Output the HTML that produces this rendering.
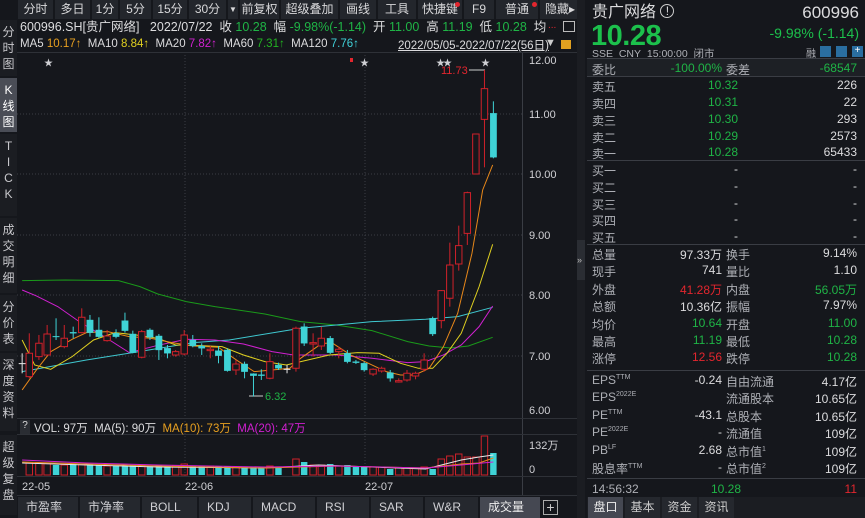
<!DOCTYPE html>
<html><head><meta charset="utf-8">
<style>
*{margin:0;padding:0;box-sizing:border-box}
body{width:865px;height:518px;background:#15171c;font-family:"Liberation Sans","Noto Sans CJK SC",sans-serif;font-size:12px;color:#d6d6d8;position:relative;overflow:hidden}
.a{position:absolute;white-space:nowrap}
.g{color:#1fb446}.r{color:#e3262e}.w{color:#dcdcde}.l{color:#aeb0b6}
.tb{position:absolute;top:0;height:19px;background:#23262c;color:#d8d8da;font-size:12px;line-height:19px;text-align:center}
.lt{position:absolute;left:0;width:17px;background:#1b1d22;color:#c8c8cc;font-size:12px;line-height:16px;text-align:center;padding-top:4px}
.bt{position:absolute;top:497px;height:21px;background:#25282e;color:#d0d0d4;font-size:12px;line-height:21px;padding-left:8px}
</style></head><body>
<div class="tb" style="left:18px;width:35px">分时</div>
<div class="tb" style="left:55px;width:35px">多日</div>
<div class="tb" style="left:92px;width:26px">1分</div>
<div class="tb" style="left:120px;width:31px">5分</div>
<div class="tb" style="left:153px;width:34px">15分</div>
<div class="tb" style="left:189px;width:37px">30分</div>
<div class="tb" style="left:228px;width:10px;font-size:8px">▼</div>
<div class="tb" style="left:240px;width:39px">前复权</div>
<div class="tb" style="left:281px;width:57px">超级叠加</div>
<div class="tb" style="left:340px;width:36px">画线</div>
<div class="tb" style="left:378px;width:38px">工具</div>
<div class="tb" style="left:418px;width:44px">快捷键</div>
<div class="tb" style="left:464px;width:30px">F9</div>
<div class="tb" style="left:496px;width:42px">普通</div>
<div class="tb" style="left:540px;width:40px">隐藏▸</div>
<div class="a" style="left:455px;top:2px;width:5px;height:5px;border-radius:3px;background:#e3262e"></div>
<div class="a" style="left:532px;top:2px;width:5px;height:5px;border-radius:3px;background:#e3262e"></div>
<div class="lt" style="top:20px;height:56px">分<br>时<br>图</div>
<div class="lt" style="top:78px;height:54px;background:#4a4d56;color:#fff">K<br>线<br>图</div>
<div class="lt" style="top:134px;height:82px">T<br>I<br>C<br>K</div>
<div class="lt" style="top:218px;height:75px">成<br>交<br>明<br>细</div>
<div class="lt" style="top:295px;height:56px">分<br>价<br>表</div>
<div class="lt" style="top:353px;height:78px">深<br>度<br>资<br>料</div>
<div class="lt" style="top:435px;height:80px">超<br>级<br>复<br>盘</div>
<div class="a w" style="left:20px;top:19px;line-height:16px;font-size:12.5px">600996.SH[贵广网络]&nbsp;&nbsp; 2022/07/22&nbsp; 收 <span class="g">10.28</span>&nbsp; 幅 <span class="g">-9.98%(-1.14)</span>&nbsp; 开 <span class="g">11.00</span>&nbsp; 高 <span class="g">11.19</span>&nbsp; 低 <span class="g">10.28</span>&nbsp; 均</div>
<div class="a r" style="left:548px;top:20px;font-size:10px">...</div>
<div class="a" style="left:563px;top:21px;width:12px;height:11px;border:1px solid #bbb"></div>
<div class="a w" style="left:20px;top:36px;line-height:16px;font-size:11.5px">MA5 <span style="color:#e8a020">10.17↑</span>&nbsp; MA10 <span style="color:#e0d020">8.84↑</span>&nbsp; MA20 <span style="color:#d020d0">7.82↑</span>&nbsp; MA60 <span style="color:#22b422">7.31↑</span>&nbsp; MA120 <span style="color:#40d0d8">7.76↑</span></div>
<div class="a w" style="left:398px;top:37px;font-size:11.5px;text-decoration:underline">2022/05/05-2022/07/22(56日)</div>
<div class="a" style="left:545px;top:37px;color:#ccc;font-size:11px">▼</div>
<div class="a" style="left:561px;top:40px;width:10px;height:9px;background:#e0a020"></div>
<svg class="a" style="left:17px;top:52px" width="560" height="444">
<g stroke="#3a3d44" stroke-dasharray="1,2" stroke-width="1">
<line x1="0" y1="62" x2="505" y2="62"/><line x1="0" y1="122" x2="505" y2="122"/><line x1="0" y1="183" x2="505" y2="183"/><line x1="0" y1="243" x2="505" y2="243"/><line x1="0" y1="304" x2="505" y2="304"/>
<line x1="168" y1="0" x2="168" y2="424"/><line x1="348" y1="0" x2="348" y2="424"/>
</g>
<line x1="505.5" y1="0" x2="505.5" y2="444" stroke="#3a3d44"/>
<line x1="0" y1="0.5" x2="560" y2="0.5" stroke="#2e3137"/>
<line x1="0" y1="366.5" x2="560" y2="366.5" stroke="#2e3137"/>
<line x1="0" y1="382.5" x2="560" y2="382.5" stroke="#2e3137"/>
<line x1="0" y1="424.5" x2="560" y2="424.5" stroke="#2e3137"/>
<line x1="0" y1="443.5" x2="560" y2="443.5" stroke="#2e3137"/>
<g fill="#d0d0d4" font-size="11" font-family="Liberation Sans">
<text x="512" y="12">12.00</text><text x="512" y="66">11.00</text><text x="512" y="126">10.00</text><text x="512" y="187">9.00</text><text x="512" y="247">8.00</text><text x="512" y="308">7.00</text><text x="512" y="362">6.00</text>
<text x="512" y="397">132万</text><text x="512" y="421">0</text>
<text x="5" y="438">22-05</text><text x="168" y="438">22-06</text><text x="348" y="438">22-07</text>
</g>
<g fill="#cfd0d4" font-size="9"><text x="27" y="14">★</text><text x="343" y="14">★</text><text x="419" y="14">★</text><text x="426" y="14">★</text><text x="464" y="14">★</text></g>
<rect x="333" y="6" width="3" height="4" fill="#e3262e"/>
<text x="424" y="22" fill="#e3262e" font-size="11">11.73</text>
<line x1="452" y1="18" x2="468" y2="18" stroke="#ccc"/>
<text x="248" y="348" fill="#1fb446" font-size="11">6.32</text>
<line x1="232" y1="344" x2="246" y2="344" stroke="#ccc"/>
<g transform="translate(-2,8) scale(0.357,0.3333)">
<g fill="none">
<polyline stroke="#1a9a1a" vector-effect="non-scaling-stroke" points="20,662 140,660 290,662 350,680 400,702 480,725 560,740 700,762 800,785 900,795 1000,812 1100,845 1160,858 1220,864 1270,858 1338,832"/>
<polyline stroke="#3fc8d0" vector-effect="non-scaling-stroke" points="20,935 200,900 330,878 500,848 600,840 800,805 900,795 1000,785 1150,778 1240,770 1338,742"/>
<polyline stroke="#d020d0" vector-effect="non-scaling-stroke" points="20,690 60,708 120,740 180,785 250,830 320,878 400,856 480,838 560,840 640,852 720,875 780,885 900,885 1000,895 1100,908 1150,905 1200,885 1250,855 1300,800 1338,738"/>
<polyline stroke="#e0d020" vector-effect="non-scaling-stroke" points="20,840 55,915 100,928 160,890 220,840 280,818 340,825 400,835 450,855 520,857 580,860 640,885 700,905 760,915 820,900 880,885 960,878 1020,880 1080,910 1130,925 1170,925 1210,880 1250,820 1300,680 1338,553"/>
<polyline stroke="#e8881a" vector-effect="non-scaling-stroke" points="20,990 60,930 100,875 160,838 200,818 260,815 320,830 380,835 440,848 500,858 570,862 620,900 670,935 720,930 770,925 800,895 860,850 890,850 940,885 990,910 1040,935 1080,945 1120,945 1160,925 1200,860 1240,760 1280,580 1310,390 1338,315"/>
</g>
<g>
<g stroke="#d0212a" fill="#15171c">
<line x1="40" y1="820" x2="40" y2="955" vector-effect="non-scaling-stroke"/><rect x="31" y="880" width="18" height="70" vector-effect="non-scaling-stroke"/>
<line x1="67" y1="825" x2="67" y2="900" vector-effect="non-scaling-stroke"/><rect x="58" y="850" width="18" height="40" vector-effect="non-scaling-stroke"/>
<line x1="90" y1="795" x2="90" y2="885" vector-effect="non-scaling-stroke"/><rect x="81" y="822" width="18" height="63" vector-effect="non-scaling-stroke"/>
<line x1="138" y1="795" x2="138" y2="865" vector-effect="non-scaling-stroke"/><rect x="129" y="835" width="18" height="25" vector-effect="non-scaling-stroke"/>
<line x1="187" y1="745" x2="187" y2="820" vector-effect="non-scaling-stroke"/><rect x="178" y="772" width="18" height="46" vector-effect="non-scaling-stroke"/>
<line x1="258" y1="810" x2="258" y2="845" vector-effect="non-scaling-stroke"/><rect x="249" y="828" width="18" height="14" vector-effect="non-scaling-stroke"/>
<line x1="355" y1="810" x2="355" y2="895" vector-effect="non-scaling-stroke"/><rect x="346" y="815" width="18" height="77" vector-effect="non-scaling-stroke"/>
<line x1="450" y1="870" x2="450" y2="890" vector-effect="non-scaling-stroke"/><rect x="441" y="875" width="18" height="10" vector-effect="non-scaling-stroke"/>
<line x1="474" y1="810" x2="474" y2="886" vector-effect="non-scaling-stroke"/><rect x="465" y="825" width="18" height="57" vector-effect="non-scaling-stroke"/>
<line x1="547" y1="858" x2="547" y2="895" vector-effect="non-scaling-stroke"/><rect x="538" y="868" width="18" height="4" vector-effect="non-scaling-stroke"/>
<line x1="619" y1="900" x2="619" y2="945" vector-effect="non-scaling-stroke"/><rect x="610" y="912" width="18" height="18" vector-effect="non-scaling-stroke"/>
<line x1="714" y1="880" x2="714" y2="958" vector-effect="non-scaling-stroke"/><rect x="705" y="905" width="18" height="50" vector-effect="non-scaling-stroke"/>
<line x1="787" y1="800" x2="787" y2="935" vector-effect="non-scaling-stroke"/><rect x="778" y="805" width="18" height="120" vector-effect="non-scaling-stroke"/>
<line x1="835" y1="820" x2="835" y2="890" vector-effect="non-scaling-stroke"/><rect x="826" y="848" width="18" height="4" vector-effect="non-scaling-stroke"/>
<line x1="858" y1="800" x2="858" y2="870" vector-effect="non-scaling-stroke"/><rect x="849" y="835" width="18" height="23" vector-effect="non-scaling-stroke"/>
<line x1="907" y1="860" x2="907" y2="895" vector-effect="non-scaling-stroke"/><rect x="898" y="868" width="18" height="7" vector-effect="non-scaling-stroke"/>
<line x1="1003" y1="925" x2="1003" y2="948" vector-effect="non-scaling-stroke"/><rect x="994" y="928" width="18" height="14" vector-effect="non-scaling-stroke"/>
<line x1="1027" y1="920" x2="1027" y2="938" vector-effect="non-scaling-stroke"/><rect x="1018" y="925" width="18" height="8" vector-effect="non-scaling-stroke"/>
<line x1="1075" y1="955" x2="1075" y2="968" vector-effect="non-scaling-stroke"/><rect x="1066" y="962" width="18" height="4" vector-effect="non-scaling-stroke"/>
<line x1="1098" y1="930" x2="1098" y2="965" vector-effect="non-scaling-stroke"/><rect x="1089" y="940" width="18" height="20" vector-effect="non-scaling-stroke"/>
<line x1="1122" y1="935" x2="1122" y2="958" vector-effect="non-scaling-stroke"/><rect x="1113" y="940" width="18" height="8" vector-effect="non-scaling-stroke"/>
<line x1="1146" y1="880" x2="1146" y2="935" vector-effect="non-scaling-stroke"/><rect x="1137" y="900" width="18" height="28" vector-effect="non-scaling-stroke"/>
<line x1="1194" y1="690" x2="1194" y2="805" vector-effect="non-scaling-stroke"/><rect x="1185" y="692" width="18" height="90" vector-effect="non-scaling-stroke"/>
<line x1="1218" y1="548" x2="1218" y2="740" vector-effect="non-scaling-stroke"/><rect x="1209" y="615" width="18" height="100" vector-effect="non-scaling-stroke"/>
<line x1="1243" y1="497" x2="1243" y2="632" vector-effect="non-scaling-stroke"/><rect x="1234" y="557" width="18" height="55" vector-effect="non-scaling-stroke"/>
<line x1="1267" y1="395" x2="1267" y2="555" vector-effect="non-scaling-stroke"/><rect x="1258" y="398" width="18" height="122" vector-effect="non-scaling-stroke"/>
<line x1="1291" y1="222" x2="1291" y2="342" vector-effect="non-scaling-stroke"/><rect x="1282" y="222" width="18" height="120" vector-effect="non-scaling-stroke"/>
<line x1="1315" y1="30" x2="1315" y2="322" vector-effect="non-scaling-stroke"/><rect x="1306" y="86" width="18" height="92" vector-effect="non-scaling-stroke"/>
</g>
<g stroke="#3fd3d6" fill="#3fd3d6">
<line x1="115" y1="775" x2="115" y2="840" vector-effect="non-scaling-stroke"/><rect x="106" y="829" width="18" height="2"/>
<line x1="163" y1="800" x2="163" y2="835" vector-effect="non-scaling-stroke"/><rect x="154" y="817" width="18" height="3"/>
<line x1="210" y1="765" x2="210" y2="830" vector-effect="non-scaling-stroke"/><rect x="201" y="780" width="18" height="38"/>
<line x1="235" y1="772" x2="235" y2="835" vector-effect="non-scaling-stroke"/><rect x="226" y="810" width="18" height="20"/>
<line x1="283" y1="808" x2="283" y2="835" vector-effect="non-scaling-stroke"/><rect x="274" y="820" width="18" height="10"/>
<line x1="308" y1="758" x2="308" y2="818" vector-effect="non-scaling-stroke"/><rect x="299" y="782" width="18" height="30"/>
<line x1="330" y1="812" x2="330" y2="880" vector-effect="non-scaling-stroke"/><rect x="321" y="822" width="18" height="56"/>
<line x1="378" y1="805" x2="378" y2="840" vector-effect="non-scaling-stroke"/><rect x="369" y="810" width="18" height="22"/>
<line x1="403" y1="822" x2="403" y2="900" vector-effect="non-scaling-stroke"/><rect x="394" y="828" width="18" height="42"/>
<line x1="427" y1="855" x2="427" y2="895" vector-effect="non-scaling-stroke"/><rect x="418" y="865" width="18" height="15"/>
<line x1="498" y1="825" x2="498" y2="862" vector-effect="non-scaling-stroke"/><rect x="489" y="840" width="18" height="18"/>
<line x1="523" y1="850" x2="523" y2="885" vector-effect="non-scaling-stroke"/><rect x="514" y="858" width="18" height="7"/>
<line x1="570" y1="858" x2="570" y2="910" vector-effect="non-scaling-stroke"/><rect x="561" y="872" width="18" height="15"/>
<line x1="595" y1="865" x2="595" y2="935" vector-effect="non-scaling-stroke"/><rect x="586" y="870" width="18" height="62"/>
<line x1="643" y1="905" x2="643" y2="955" vector-effect="non-scaling-stroke"/><rect x="634" y="912" width="18" height="23"/>
<line x1="668" y1="940" x2="668" y2="1010" vector-effect="non-scaling-stroke"/><rect x="659" y="941" width="18" height="6"/>
<line x1="690" y1="928" x2="690" y2="960" vector-effect="non-scaling-stroke"/><rect x="681" y="944" width="18" height="3"/>
<line x1="738" y1="908" x2="738" y2="930" vector-effect="non-scaling-stroke"/><rect x="729" y="915" width="18" height="10"/>
<line x1="810" y1="790" x2="810" y2="858" vector-effect="non-scaling-stroke"/><rect x="801" y="800" width="18" height="50"/>
<line x1="883" y1="828" x2="883" y2="882" vector-effect="non-scaling-stroke"/><rect x="874" y="835" width="18" height="43"/>
<line x1="931" y1="870" x2="931" y2="910" vector-effect="non-scaling-stroke"/><rect x="922" y="880" width="18" height="25"/>
<line x1="955" y1="900" x2="955" y2="912" vector-effect="non-scaling-stroke"/><rect x="946" y="905" width="18" height="3"/>
<line x1="978" y1="905" x2="978" y2="935" vector-effect="non-scaling-stroke"/><rect x="969" y="910" width="18" height="20"/>
<line x1="1051" y1="930" x2="1051" y2="965" vector-effect="non-scaling-stroke"/><rect x="1042" y="938" width="18" height="17"/>
<line x1="1170" y1="770" x2="1170" y2="828" vector-effect="non-scaling-stroke"/><rect x="1161" y="775" width="18" height="47"/>
<line x1="1340" y1="124" x2="1340" y2="295" vector-effect="non-scaling-stroke"/><rect x="1331" y="160" width="18" height="132"/>
</g>
<g stroke="#e8e8e8"><line x1="20" y1="880" x2="20" y2="940" vector-effect="non-scaling-stroke"/><rect x="11" y="910" width="18" height="2" fill="#e8e8e8"/><line x1="762" y1="915" x2="762" y2="940" vector-effect="non-scaling-stroke"/><rect x="753" y="927" width="18" height="2" fill="#e8e8e8"/></g>
</g>
</g>
<g transform="translate(-2,0) scale(0.357,1)">
<g stroke="#d0212a" fill="none">
<rect x="31" y="411" width="18" height="12" vector-effect="non-scaling-stroke"/><rect x="58" y="411" width="18" height="12" vector-effect="non-scaling-stroke"/><rect x="81" y="411" width="18" height="12" vector-effect="non-scaling-stroke"/><rect x="129" y="413" width="18" height="10" vector-effect="non-scaling-stroke"/><rect x="178" y="412" width="18" height="11" vector-effect="non-scaling-stroke"/><rect x="249" y="414" width="18" height="9" vector-effect="non-scaling-stroke"/><rect x="346" y="413" width="18" height="10" vector-effect="non-scaling-stroke"/><rect x="441" y="414" width="18" height="9" vector-effect="non-scaling-stroke"/><rect x="465" y="412" width="18" height="11" vector-effect="non-scaling-stroke"/><rect x="538" y="414" width="18" height="9" vector-effect="non-scaling-stroke"/><rect x="610" y="415" width="18" height="8" vector-effect="non-scaling-stroke"/><rect x="705" y="414" width="18" height="9" vector-effect="non-scaling-stroke"/><rect x="778" y="407" width="18" height="16" vector-effect="non-scaling-stroke"/><rect x="826" y="413" width="18" height="10" vector-effect="non-scaling-stroke"/><rect x="849" y="413" width="18" height="10" vector-effect="non-scaling-stroke"/><rect x="898" y="414" width="18" height="9" vector-effect="non-scaling-stroke"/><rect x="994" y="415" width="18" height="8" vector-effect="non-scaling-stroke"/><rect x="1018" y="415" width="18" height="8" vector-effect="non-scaling-stroke"/><rect x="1066" y="416" width="18" height="7" vector-effect="non-scaling-stroke"/><rect x="1089" y="416" width="18" height="7" vector-effect="non-scaling-stroke"/><rect x="1113" y="416" width="18" height="7" vector-effect="non-scaling-stroke"/><rect x="1137" y="415" width="18" height="8" vector-effect="non-scaling-stroke"/><rect x="1185" y="407" width="18" height="16" vector-effect="non-scaling-stroke"/><rect x="1209" y="404" width="18" height="19" vector-effect="non-scaling-stroke"/><rect x="1234" y="402" width="18" height="21" vector-effect="non-scaling-stroke"/><rect x="1258" y="405" width="18" height="18" vector-effect="non-scaling-stroke"/><rect x="1282" y="405" width="18" height="18" vector-effect="non-scaling-stroke"/><rect x="1306" y="384" width="18" height="39" vector-effect="non-scaling-stroke"/>
</g>
<g fill="#3fd3d6">
<rect x="106" y="413" width="18" height="10"/><rect x="154" y="412" width="18" height="11"/><rect x="201" y="412" width="18" height="11"/><rect x="226" y="413" width="18" height="10"/><rect x="274" y="414" width="18" height="9"/><rect x="299" y="414" width="18" height="9"/><rect x="321" y="413" width="18" height="10"/><rect x="369" y="414" width="18" height="9"/><rect x="394" y="413" width="18" height="10"/><rect x="418" y="414" width="18" height="9"/><rect x="489" y="414" width="18" height="9"/><rect x="514" y="414" width="18" height="9"/><rect x="561" y="414" width="18" height="9"/><rect x="586" y="414" width="18" height="9"/><rect x="634" y="415" width="18" height="8"/><rect x="659" y="415" width="18" height="8"/><rect x="681" y="415" width="18" height="8"/><rect x="729" y="415" width="18" height="8"/><rect x="801" y="410" width="18" height="13"/><rect x="874" y="412" width="18" height="11"/><rect x="922" y="413" width="18" height="10"/><rect x="946" y="415" width="18" height="8"/><rect x="969" y="415" width="18" height="8"/><rect x="1042" y="417" width="18" height="6"/><rect x="1161" y="417" width="18" height="6"/><rect x="1331" y="401" width="18" height="22"/>
</g>
<g fill="none">
<polyline stroke="#e8e8e8" vector-effect="non-scaling-stroke" points="20,411 200,413 400,415 700,416 850,413 1000,415 1150,417 1250,408 1300,405 1340,403"/>
<polyline stroke="#e8881a" vector-effect="non-scaling-stroke" points="20,410 200,412 400,414 700,416 900,414 1150,416 1250,412 1300,411 1340,406"/>
<polyline stroke="#d020d0" vector-effect="non-scaling-stroke" points="20,408 200,411 400,413 700,415 900,414 1150,416 1250,413 1340,410"/>
</g>
</g>
</svg>
<div class="a" style="left:20px;top:420px;width:10px;height:14px;background:#2a2d33;color:#ddd;font-size:10px;text-align:center">?</div>
<div class="a w" style="left:34px;top:420px;font-size:11.5px">VOL: 97万&nbsp; MA(5): 90万&nbsp; <span style="color:#e8a020">MA(10): 73万</span>&nbsp; <span style="color:#d020d0">MA(20): 47万</span></div>
<div class="bt" style="left:18px;width:60px">市盈率</div>
<div class="bt" style="left:80px;width:60px">市净率</div>
<div class="bt" style="left:142px;width:55px">BOLL</div>
<div class="bt" style="left:199px;width:52px">KDJ</div>
<div class="bt" style="left:253px;width:62px">MACD</div>
<div class="bt" style="left:317px;width:52px">RSI</div>
<div class="bt" style="left:371px;width:52px">SAR</div>
<div class="bt" style="left:425px;width:53px">W&amp;R</div>
<div class="bt" style="left:480px;width:60px;background:#454852;color:#eee">成交量</div>
<div class="a" style="left:543px;top:500px;width:15px;height:15px;border:1px solid #aaa;color:#ccc;font-size:14px;line-height:12px;text-align:center">+</div>
<div class="a" style="left:577px;top:0;width:8px;height:518px;background:#1b1d22"></div>
<div class="a" style="left:577px;top:240px;width:8px;height:40px;background:#2a2d33;color:#bbb;font-size:9px;line-height:40px">»</div>
<div class="a w" style="left:592px;top:4px;font-size:16px;line-height:18px">贵广网络 <span style="font-size:12px;border:1px solid #ccc;border-radius:50%;display:inline-block;width:14px;height:14px;line-height:12px;text-align:center;vertical-align:2px">!</span></div>
<div class="a w" style="right:6px;top:3px;font-size:17px;line-height:20px">600996</div>
<div class="a" style="left:591px;top:21px;font-size:29px;line-height:30px;font-weight:bold;color:#1cc04c;letter-spacing:-0.5px">10.28</div>
<div class="a" style="right:6px;top:25px;font-size:14px;color:#1cc04c">-9.98% (-1.14)</div>
<div class="a l" style="left:592px;top:46px;font-size:10.5px">SSE&nbsp; CNY&nbsp; 15:00:00&nbsp; 闭市</div>
<div class="a l" style="left:806px;top:45px;font-size:10px">融</div>
<div class="a" style="left:820px;top:46px;width:11px;height:11px;background:#2a6ea0"></div>
<div class="a" style="left:836px;top:46px;width:11px;height:11px;background:#2a6ea0"></div>
<div class="a" style="left:852px;top:46px;width:11px;height:11px;background:#2a6ea0;color:#fff;font-size:10px;line-height:10px;text-align:center">+</div>
<div class="a" style="left:587px;top:58px;width:278px;height:1px;background:#3a3d44"></div>
<div class="a" style="left:587px;top:59px;width:278px;height:17px;background:#1d2025"></div>
<div class="a" style="left:587px;top:76px;width:278px;height:1px;background:#3a3d44"></div>
<div class="a" style="left:587px;top:160px;width:278px;height:1px;background:#3a3d44"></div>
<div class="a" style="left:587px;top:244px;width:278px;height:1px;background:#3a3d44"></div>
<div class="a" style="left:587px;top:370px;width:278px;height:1px;background:#3a3d44"></div>
<div class="a" style="left:587px;top:478px;width:278px;height:1px;background:#3a3d44"></div>
<div class="a l" style="left:592px;top:61px">委比</div><div class="a g" style="right:143px;top:61px">-100.00%</div><div class="a l" style="left:726px;top:61px">委差</div><div class="a g" style="right:8px;top:61px">-68547</div>
<div class="a l" style="left:592px;top:78px">卖五</div><div class="a g" style="right:127px;top:78px">10.32</div><div class="a w" style="right:8px;top:78px">226</div>
<div class="a l" style="left:592px;top:95px">卖四</div><div class="a g" style="right:127px;top:95px">10.31</div><div class="a w" style="right:8px;top:95px">22</div>
<div class="a l" style="left:592px;top:112px">卖三</div><div class="a g" style="right:127px;top:112px">10.30</div><div class="a w" style="right:8px;top:112px">293</div>
<div class="a l" style="left:592px;top:129px">卖二</div><div class="a g" style="right:127px;top:129px">10.29</div><div class="a w" style="right:8px;top:129px">2573</div>
<div class="a l" style="left:592px;top:145px">卖一</div><div class="a g" style="right:127px;top:145px">10.28</div><div class="a w" style="right:8px;top:145px">65433</div>
<div class="a l" style="left:592px;top:162px">买一</div><div class="a w" style="right:127px;top:162px">-</div><div class="a w" style="right:8px;top:162px">-</div>
<div class="a l" style="left:592px;top:179px">买二</div><div class="a w" style="right:127px;top:179px">-</div><div class="a w" style="right:8px;top:179px">-</div>
<div class="a l" style="left:592px;top:196px">买三</div><div class="a w" style="right:127px;top:196px">-</div><div class="a w" style="right:8px;top:196px">-</div>
<div class="a l" style="left:592px;top:212px">买四</div><div class="a w" style="right:127px;top:212px">-</div><div class="a w" style="right:8px;top:212px">-</div>
<div class="a l" style="left:592px;top:229px">买五</div><div class="a w" style="right:127px;top:229px">-</div><div class="a w" style="right:8px;top:229px">-</div>
<div class="a l" style="left:592px;top:246px">总量</div><div class="a w" style="right:143px;top:246px">97.33万</div><div class="a l" style="left:726px;top:246px">换手</div><div class="a w" style="right:8px;top:246px">9.14%</div>
<div class="a l" style="left:592px;top:263px">现手</div><div class="a w" style="right:143px;top:263px">741</div><div class="a l" style="left:726px;top:263px">量比</div><div class="a w" style="right:8px;top:263px">1.10</div>
<div class="a l" style="left:592px;top:281px">外盘</div><div class="a r" style="right:143px;top:281px">41.28万</div><div class="a l" style="left:726px;top:281px">内盘</div><div class="a g" style="right:8px;top:281px">56.05万</div>
<div class="a l" style="left:592px;top:298px">总额</div><div class="a w" style="right:143px;top:298px">10.36亿</div><div class="a l" style="left:726px;top:298px">振幅</div><div class="a w" style="right:8px;top:298px">7.97%</div>
<div class="a l" style="left:592px;top:316px">均价</div><div class="a g" style="right:143px;top:316px">10.64</div><div class="a l" style="left:726px;top:316px">开盘</div><div class="a g" style="right:8px;top:316px">11.00</div>
<div class="a l" style="left:592px;top:333px">最高</div><div class="a g" style="right:143px;top:333px">11.19</div><div class="a l" style="left:726px;top:333px">最低</div><div class="a g" style="right:8px;top:333px">10.28</div>
<div class="a l" style="left:592px;top:350px">涨停</div><div class="a r" style="right:143px;top:350px">12.56</div><div class="a l" style="left:726px;top:350px">跌停</div><div class="a g" style="right:8px;top:350px">10.28</div>
<div class="a l" style="left:592px;top:373px">EPS<sup style="font-size:7px">TTM</sup></div><div class="a w" style="right:143px;top:373px">-0.24</div><div class="a l" style="left:726px;top:373px">自由流通</div><div class="a w" style="right:8px;top:373px">4.17亿</div>
<div class="a l" style="left:592px;top:390px">EPS<sup style="font-size:7px">2022E</sup></div><div class="a l" style="left:726px;top:390px">流通股本</div><div class="a w" style="right:8px;top:390px">10.65亿</div>
<div class="a l" style="left:592px;top:408px">PE<sup style="font-size:7px">TTM</sup></div><div class="a w" style="right:143px;top:408px">-43.1</div><div class="a l" style="left:726px;top:408px">总股本</div><div class="a w" style="right:8px;top:408px">10.65亿</div>
<div class="a l" style="left:592px;top:425px">PE<sup style="font-size:7px">2022E</sup></div><div class="a w" style="right:143px;top:425px">-</div><div class="a l" style="left:726px;top:425px">流通值</div><div class="a w" style="right:8px;top:425px">109亿</div>
<div class="a l" style="left:592px;top:443px">PB<sup style="font-size:7px">LF</sup></div><div class="a w" style="right:143px;top:443px">2.68</div><div class="a l" style="left:726px;top:443px">总市值<sup style="font-size:7px">1</sup></div><div class="a w" style="right:8px;top:443px">109亿</div>
<div class="a l" style="left:592px;top:460px">股息率<sup style="font-size:7px">TTM</sup></div><div class="a w" style="right:143px;top:460px">-</div><div class="a l" style="left:726px;top:460px">总市值<sup style="font-size:7px">2</sup></div><div class="a w" style="right:8px;top:460px">109亿</div>
<div class="a l" style="left:592px;top:482px">14:56:32</div><div class="a g" style="left:711px;top:482px">10.28</div><div class="a r" style="right:8px;top:482px">11</div>
<div class="a" style="left:587px;top:497px;width:278px;height:21px;background:#1b1d22"></div>
<div class="a" style="left:588px;top:497px;width:35px;height:21px;background:#454852;color:#eee;line-height:21px;text-align:center">盘口</div>
<div class="a" style="left:625px;top:497px;width:35px;height:21px;background:#25282e;color:#ccc;line-height:21px;text-align:center">基本</div>
<div class="a" style="left:662px;top:497px;width:35px;height:21px;background:#25282e;color:#ccc;line-height:21px;text-align:center">资金</div>
<div class="a" style="left:699px;top:497px;width:35px;height:21px;background:#25282e;color:#ccc;line-height:21px;text-align:center">资讯</div>
</body></html>
